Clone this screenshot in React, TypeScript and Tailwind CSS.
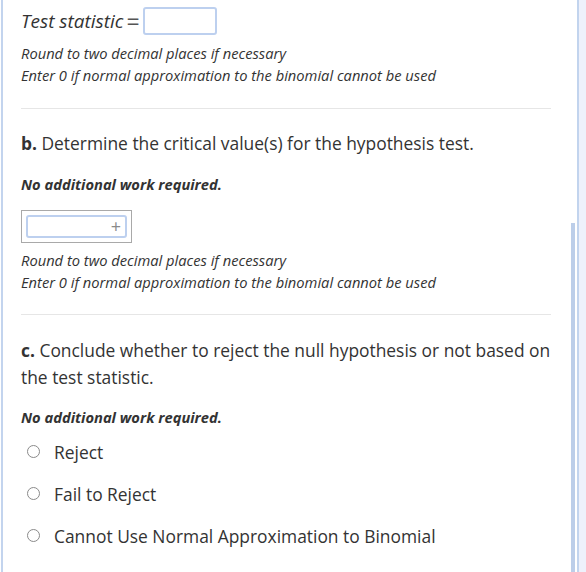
import React from 'react';

const Hints: React.FC<{ top: string }> = ({ top }) => (
    <div className={`${top} text-[14.7px] italic leading-[22px] text-[#333]`}>
        <p>Round to two decimal places if necessary</p>
        <p>Enter 0 if normal approximation to the binomial cannot be used</p>
    </div>
);

const Radio: React.FC<{ label: string }> = ({ label }) => (
    <label className="flex items-center h-[42px]">
        <span className="ml-[6px] w-[13px] h-[13px] rounded-full border border-[#8a8a8a] bg-white"></span>
        <span className="ml-[14px] text-[17.4px] text-[#333]">{label}</span>
    </label>
);

const App: React.FC = () => {
    return (
        <div className="flex w-[586px] h-[572px] overflow-hidden bg-white" style={{ fontFamily: '"Open Sans", sans-serif' }}>
            <div className="ml-px flex-1 border-l-2 border-[#c3d4ee] pl-[18px] pr-[20px]">
                <div className="flex items-center pt-[7px]">
                    <span className="text-[19px] italic text-[#333]">Test statistic</span>
                    <span className="ml-[3px] text-[23px] leading-none text-[#555]">=</span>
                    <span className="ml-[3px] w-[74px] h-[28px] rounded-[3px] border-2 border-[#bdd0ef]"></span>
                </div>
                <Hints top="mt-[6px]" />
                <div className="mt-[22px] border-t border-[#e6e6e6]"></div>

                <p className="mt-[21px] text-[17.4px] leading-[27px] text-[#333]"><b>b.</b> Determine the critical value(s) for the hypothesis test.</p>
                <p className="mt-[16px] text-[14.7px] font-bold italic text-[#333]">No additional work required.</p>
                <div className="mt-[15px] w-[111px] h-[33px] border border-[#a9a9a9] p-[4px]">
                    <div className="flex items-center justify-end h-full rounded-[3px] border-2 border-[#bdd0ef] pr-[4px] text-[18px] leading-none text-[#8a8a8a]">+</div>
                </div>
                <Hints top="mt-[6px]" />
                <div className="mt-[21px] border-t border-[#e6e6e6]"></div>

                <p className="mt-[22px] text-[17.4px] leading-[27px] text-[#333]"><b>c.</b> Conclude whether to reject the null hypothesis or not based on the test statistic.</p>
                <p className="mt-[15px] text-[14.7px] font-bold italic text-[#333]">No additional work required.</p>
                <div className="mt-[3px]">
                    <Radio label="Reject" />
                    <Radio label="Fail to Reject" />
                    <Radio label="Cannot Use Normal Approximation to Binomial" />
                </div>
            </div>
            <div className="w-[4px] mr-[2px]">
                <div className="mt-[223px] h-full bg-[#bccee9]"></div>
            </div>
            <div className="w-[2px] bg-[#c2d4ee]"></div>
            <div className="w-[7px] bg-[#eef1fb]"></div>
        </div>
    );
};

export default App;
